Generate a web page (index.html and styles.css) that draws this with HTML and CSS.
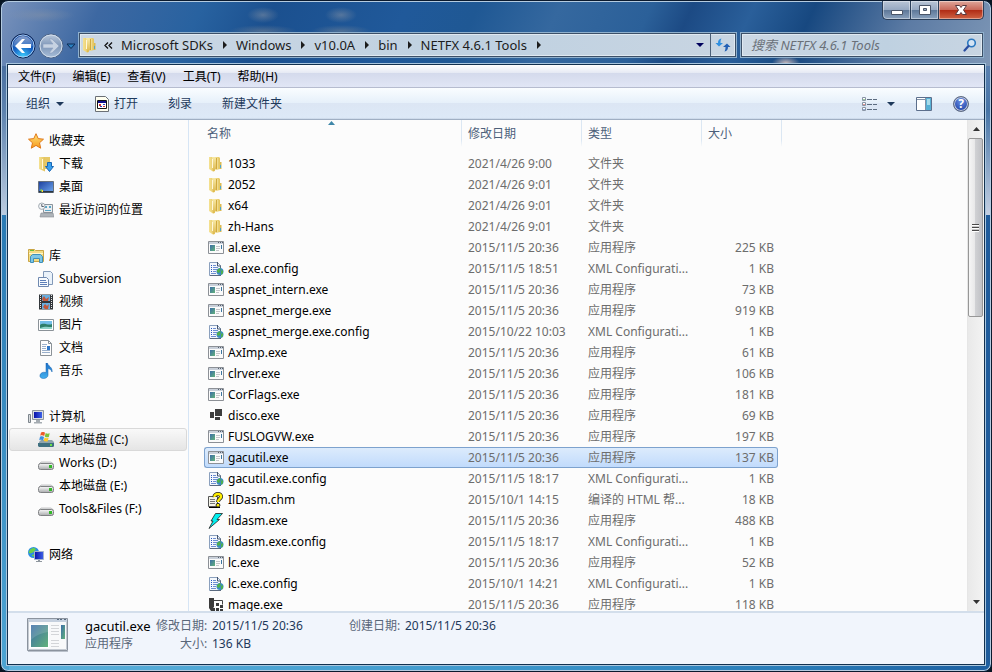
FILE: index.html
```html
<!DOCTYPE html>
<html lang="zh-CN">

<head>
    <meta charset="UTF-8">
    <meta name="viewport" content="width=device-width, initial-scale=1.0">
    <title>NETFX 4.6.1 Tools</title>
    <link rel="stylesheet" href="styles.css">
</head>

<body>
    <!-- icon sprite -->
    <svg class="sprite" aria-hidden="true">
        <defs>
            <linearGradient id="gFolder" x1="0" x2="1" y1="0" y2="0">
                <stop offset="0" stop-color="#f5e293"/><stop offset="1" stop-color="#e3c35c"/>
            </linearGradient>
            <linearGradient id="gFlap" x1="0" x2="0" y1="0" y2="1">
                <stop offset="0" stop-color="#f7e9a8"/><stop offset="1" stop-color="#dcb648"/>
            </linearGradient>
            <linearGradient id="gExe" x1="0" x2="1" y1="0" y2="1">
                <stop offset="0" stop-color="#3c6da8"/><stop offset="1" stop-color="#62b27a"/>
            </linearGradient>
            <linearGradient id="gScreen" x1="0" x2="1" y1="0" y2="1">
                <stop offset="0" stop-color="#1c3f9c"/><stop offset="1" stop-color="#6fa8f0"/>
            </linearGradient>
            <linearGradient id="gMonitor" x1="0" x2="1" y1="0" y2="0">
                <stop offset="0" stop-color="#0a12a8"/><stop offset="1" stop-color="#3d62e8"/>
            </linearGradient>
            <linearGradient id="gStar" x1="0" x2="0" y1="0" y2="1">
                <stop offset="0" stop-color="#ffe27a"/><stop offset="1" stop-color="#f59a1c"/>
            </linearGradient>
            <linearGradient id="gNote" x1="0" x2="0" y1="0" y2="1">
                <stop offset="0" stop-color="#1c6fc8"/><stop offset="1" stop-color="#43b0ee"/>
            </linearGradient>
            <linearGradient id="gDrive" x1="0" x2="0" y1="0" y2="1">
                <stop offset="0" stop-color="#fafafa"/><stop offset="1" stop-color="#a9abad"/>
            </linearGradient>
            <radialGradient id="gBack" cx=".5" cy=".95" r=".9">
                <stop offset="0" stop-color="#3fd0ff"/><stop offset=".5" stop-color="#1763c4"/><stop offset="1" stop-color="#0c3a93"/>
            </radialGradient>
            <linearGradient id="gGloss" x1="0" x2="0" y1="0" y2="1">
                <stop offset="0" stop-color="#fff" stop-opacity=".85"/><stop offset="1" stop-color="#fff" stop-opacity=".2"/>
            </linearGradient>
            <linearGradient id="gForward" x1="0" x2="0" y1="0" y2="1">
                <stop offset="0" stop-color="#b9c8dc"/><stop offset=".5" stop-color="#7f97b8"/><stop offset="1" stop-color="#a9bfda"/>
            </linearGradient>
        </defs>

        <symbol id="folder" viewBox="0 0 16 16">
            <path d="M1 1h6v14l-2 .5L1 13z" fill="url(#gFolder)"/>
            <path d="M7 1h4l1 1v11l-4 1z" fill="url(#gFolder)"/>
            <path d="M4 1h3l1 2v10l-3 2.500z" fill="url(#gFlap)"/>
            <path d="M4.500 3v9" stroke="#fff8dc"/>
            <path d="M8.500 2v11" stroke="#d0a93e"/>
            <path d="M9.500 2v11" stroke="#f0dc90"/>
            <path d="M12 6h1.500v7H12z" fill="#dcb950"/>
            <path d="M12 9h1v3h-1z" fill="#4aa6d0"/>
        </symbol>
        <symbol id="exe" viewBox="0 0 16 16">
            <path d="M.5 1.500h15v12H.5z" fill="#fbfbfb" stroke="#8c9096"/>
            <path d="M1 2h14v2H1z" fill="#c9d0da"/>
            <path d="M10 2h1v1h-1zM12 2h1v1h-1zM14 2h1v1h-1z" fill="#55606e"/>
            <path d="M2 5h5v6H2z" fill="url(#gExe)"/>
            <path d="M8 6.500h4M8 8.500h4M8 10.500h3" stroke="#c3c6ca"/>
            <path d="M13 5h1v4h-1z" fill="#3c76a0"/>
        </symbol>
        <symbol id="config" viewBox="0 0 16 16">
            <path d="M1.500 1.500h8l3 3v10h-11z" fill="#f4f8fd" stroke="#8ba0bd"/>
            <path d="M9.500 1v4h3.500" fill="none" stroke="#46566e"/>
            <path d="M12.500 5v10M2 14.500h10" stroke="#5a6a80"/>
            <path d="M3 4.500h1M3 6.500h1M3 8.500h1M3 10.500h1" stroke="#2454c0"/>
            <path d="M5 4.500h3M5 6.500h5M5 8.500h4M5 10.500h3M3 12.500h5" stroke="#6f8fd2"/>
            <circle cx="12" cy="10.500" r="3.500" fill="#3b8ac4"/>
            <path d="M9 9l3-2 1 2-2 3-2-1zM13 10l2-1v3l-2 2z" fill="#4faf4c"/>
        </symbol>
        <symbol id="disco" viewBox="0 0 16 16">
            <path d="M2 4h4v6H2zM7 1h7v7H7zM7 9h5v3H7z" fill="#3d3d3d"/>
        </symbol>
        <symbol id="chm" viewBox="0 0 16 16">
            <path d="M.5 4.500h9v10h-9z" fill="#f4f4ea" stroke="#555"/>
            <path d="M1 15.500h11" stroke="#000"/>
            <path d="M2 7.500h5M2 9.500h5M2 11.500h5" stroke="#777"/>
            <path d="M6.500 5C6 1 14 1 13 5c-.5 2-3 2-3 5" fill="none" stroke="#222" stroke-width="4"/>
            <path d="M6.500 5C6 1 14 1 13 5c-.5 2-3 2-3 5" fill="none" stroke="#ffee00" stroke-width="2.500"/>
            <circle cx="10" cy="13.200" r="1.900" fill="#ffee00" stroke="#222"/>
        </symbol>
        <symbol id="bolt" viewBox="0 0 16 16">
            <path d="M7.500.5h7L9 6.500h2.500L1 15.500l4-7.500H3z" fill="#00f0f0" stroke="#222" stroke-width=".8"/>
        </symbol>
        <symbol id="mage" viewBox="0 0 16 16">
            <path d="M1 1h5v9l-1 1h2v3H3l-2-3z" fill="#3a3a3a"/>
            <path d="M6 3.500h8.500v4" fill="none" stroke="#444"/>
            <path d="M8 6h3v3H8zM12 8h3v3h-3zM8 11h3v3H8zM12 12h3v3h-3z" fill="#3a3a3a"/>
        </symbol>
        <symbol id="star" viewBox="0 0 16 16">
            <path d="M8 .7l2.200 4.900 5.300.6-4 3.600 1.200 5.400L8 12.400l-4.700 2.800 1.200-5.400-4-3.600 5.300-.6z" fill="url(#gStar)" stroke="#e07818"/>
        </symbol>
        <symbol id="download" viewBox="0 0 16 16">
            <path d="M1 1h6v14.500L1 13z" fill="url(#gFolder)"/>
            <path d="M7 1h5v12H7z" fill="#e6c866"/>
            <path d="M4.500 3v10" stroke="#fff8dc"/>
            <path d="M9.500 6.500h4v4h2l-4 5-4-5h2z" fill="#3aa0ee" stroke="#1766b4"/>
        </symbol>
        <symbol id="desktop" viewBox="0 0 16 16">
            <path d="M.5 2.500h15v11H.5z" fill="url(#gScreen)" stroke="#66707c"/>
            <path d="M1 12h14v1.500H1z" fill="#2b3640"/>
            <path d="M2 11l1.500-1 1 1.500-1 1.500z" fill="#7fd04c"/>
            <path d="M4 11h1v2H4z" fill="#ffcf3a"/>
        </symbol>
        <symbol id="recent" viewBox="0 0 16 16">
            <path d="M5.500 2.500h9v8h-9z" fill="#e9edf0" stroke="#8b949c"/>
            <path d="M7 4h2v2H7zM11 4h2v2h-2zM7 8h6v1H7z" fill="#58a6c8"/>
            <path d="M3 11h12l1 4H2z" fill="#aeb4b9" stroke="#868c92" stroke-width=".6"/>
            <circle cx="3.800" cy="4.200" r="3.200" fill="#f4f6f8" stroke="#a2aab1"/>
            <path d="M3.800 2v2.500h2" fill="none" stroke="#56606a"/>
        </symbol>
        <symbol id="library" viewBox="0 0 16 16">
            <path d="M.5 3.500v-2h6l1 1h8v11H.5z" fill="#f2dc85" stroke="#c9a545"/>
            <path d="M2 2.500h4" stroke="#6cbf3a"/>
            <path d="M1 5.500h14" stroke="#fff6cd"/>
            <path d="M2.500 14.500v-6l2-2h8l2 2v6h-3v-4h-6v4z" fill="#7cc6e6" stroke="#3f8fb8"/>
        </symbol>
        <symbol id="subversion" viewBox="0 0 16 16">
            <path d="M5.500.5h7l2 2v11h-9z" fill="#eaf2fa" stroke="#8299b8"/>
            <path d="M.5 6.500h8l2 2v7H.5z" fill="#f8fbfe" stroke="#6f89b0"/>
            <path d="M2 9.500h6M2 11.500h7M2 13.500h7" stroke="#5e7fb8"/>
        </symbol>
        <symbol id="video" viewBox="0 0 16 16">
            <path d="M1 .5h14v15H1z" fill="#33373b"/>
            <path d="M2.500 1v14M13.500 1v14" stroke="#e8e8e8" stroke-dasharray="1 1"/>
            <path d="M4 1h8v6H4zM4 9h8v6H4z" fill="#68aee0"/>
            <path d="M4 5l2-3 2 3 3-2-1 4H5zM5 13l2-3 2 2 2-2-1 5H7z" fill="#c2573a"/>
        </symbol>
        <symbol id="picture" viewBox="0 0 16 16">
            <path d="M.5 2.500h15v11H.5z" fill="#fff" stroke="#8b9298"/>
            <path d="M2 4h12v4H2z" fill="#74bfe8"/>
            <path d="M2 8c4-3 8 1 12-1v5H2z" fill="#2f7f6a"/>
            <path d="M2 11c5-2 8-1 12-1v2H2z" fill="#8fd4c8"/>
        </symbol>
        <symbol id="document" viewBox="0 0 16 16">
            <path d="M2.500.5h8l3 3v12h-11z" fill="#fdfdfd" stroke="#8b9298"/>
            <path d="M10.500.5v3h3" fill="none" stroke="#8b9298"/>
            <path d="M4 4.500h5M4 6.500h4M4 8.500h4M4 10.500h8M4 12.500h8" stroke="#9ab0cc"/>
            <path d="M9 6h3v4H9z" fill="#2f77c8"/>
        </symbol>
        <symbol id="music" viewBox="0 0 16 16">
            <path d="M8 0h1.500c0 3 5.500 4 4.500 9-.5-2-2-3-4-3.500V12c0 2-2 3.500-4.500 3.500S1.500 14 2 12s3-3.500 6-2.500z" fill="url(#gNote)" stroke="#1763b0" stroke-width=".5"/>
        </symbol>
        <symbol id="computer" viewBox="0 0 16 16">
            <path d="M.5 5.500h2v8h-2z" fill="#d8dcdf" stroke="#7d858c"/>
            <path d="M4.500 1.500h11v9h-11z" fill="#d9dde1" stroke="#8f979e"/>
            <path d="M6 3h8v6H6z" fill="url(#gMonitor)"/>
            <path d="M8 11h4v2h2v1.500H6V13h2z" fill="#a5acb2"/>
        </symbol>
        <symbol id="sysdrive" viewBox="0 0 16 16">
            <path d="M1 10l2-2h11l2 2v4l-1 1H1z" fill="#8fa3ad"/>
            <path d="M0 11h16v3l-1 1H1l-1-1z" fill="#3f7080"/>
            <path d="M12 12h2v2h-2z" fill="#6be04a"/>
            <path d="M3 .5c2-1 3-.5 4 .3L6.200 4c-1-.8-2.500-1-4-.3z" fill="#ee5a28"/>
            <path d="M7.700 1c1 .8 2.500 1 4 .3L10.800 5c-1.500.6-3 .4-4-.5z" fill="#7cc23a"/>
            <path d="M2 4.700c1.500-.7 3-.5 4 .3L5.200 8.500c-1-.8-2.500-1-4-.3z" fill="#3a8ee0"/>
            <path d="M6.600 5.400c1 .8 2.500 1 4 .3l-.9 3.500c-1.500.6-3 .4-4-.4z" fill="#ffc928"/>
        </symbol>
        <symbol id="drive" viewBox="0 0 16 16">
            <path d="M1 9l2-2h10l2.500 2z" fill="#e4e5e6" stroke="#a4a6a8" stroke-width=".6"/>
            <rect x=".5" y="8.500" width="15" height="6" rx="2" fill="url(#gDrive)" stroke="#808284"/>
            <path d="M11 10h3v3h-3z" fill="#34b82a"/>
        </symbol>
        <symbol id="network" viewBox="0 0 16 16">
            <circle cx="5.500" cy="5.500" r="5.500" fill="#2a8ee4"/>
            <path d="M2 2.500l4-2 2 2-3 3-3 1-1.500-1zM4 8l3-1v3l-3-1z" fill="#6ad04a"/>
            <path d="M6.500 4.500h9v8h-9z" fill="url(#gMonitor)" stroke="#a5b4cc"/>
            <path d="M10 13h2v1h2v1H8v-1h2z" fill="#8f979e"/>
        </symbol>
        <symbol id="caret" viewBox="0 0 8 4"><path d="M0 0h8L4 4z" fill="currentColor"/></symbol>
        <symbol id="arrow" viewBox="0 0 4 8"><path d="M0 0v8l4-4z" fill="currentColor"/></symbol>
    </svg>

    <div class="window">
        <div class="caption">
            <button class="cap-btn" aria-label="最小化">
                <svg width="14" height="12" viewBox="0 0 14 12"><path d="M1.500 6.500h11v4h-11z" fill="#fff" stroke="#4a5568"/></svg>
            </button>
            <button class="cap-btn" aria-label="最大化">
                <svg width="14" height="12" viewBox="0 0 14 12"><path d="M1.500 1.500h11v9h-11zM5.500 4.500h3v2h-3z" fill="#fff" fill-rule="evenodd" stroke="#4a5568"/></svg>
            </button>
            <button class="cap-btn cap-close" aria-label="关闭">
                <svg width="14" height="12" viewBox="0 0 14 12"><path d="M1.500 1.500h4L7 3.500l1.500-2h4L9.500 6l3 4.500h-4L7 8.500l-1.500 2h-4l3-4.500z" fill="#fff" stroke="#5a3a3e"/></svg>
            </button>
        </div>

        <div class="nav-row">
            <div class="travel">
                <button aria-label="后退">
                    <svg width="26" height="26" viewBox="0 0 26 26">
                        <circle cx="13" cy="13" r="12" fill="url(#gBack)" stroke="#0d2250"/>
                        <circle cx="13" cy="13" r="11" fill="none" stroke="#a9cdf2"/>
                        <path d="M3 13a10 10 0 0 1 20 0c-6 2-14 2-20 0z" fill="url(#gGloss)" opacity=".6"/>
                        <path d="M5 13l7-7h3l-4 5h10v4H11l4 5h-3z" fill="#fff"/>
                    </svg>
                </button>
                <button aria-label="前进">
                    <svg width="26" height="26" viewBox="0 0 26 26">
                        <circle cx="13" cy="13" r="12" fill="url(#gForward)" stroke="#4c6488"/>
                        <circle cx="13" cy="13" r="11" fill="none" stroke="#d2deec"/>
                        <path d="M21 13l-7-7h-3l4 5H5v4h10l-4 5h3z" fill="#c6d2e2" stroke="#8ba0bf" stroke-width=".6"/>
                    </svg>
                </button>
                <button class="history" aria-label="最近浏览的页面">
                    <svg width="10" height="7" viewBox="0 0 10 7"><path d="M1 1h8L5 5.500z" fill="#2a7fc0" stroke="#0c2c54"/></svg>
                </button>
            </div>
            <div class="address">
                <svg class="icon"><use href="#folder"/></svg>
                <button class="chevrons" aria-label="上级">
                    <svg width="9" height="7" viewBox="0 0 9 7"><path d="M4 .5L1 3.500l3 3M8 .5L5 3.500l3 3" fill="none" stroke="#111" stroke-width="1.300"/></svg>
                </button>
                <button>Microsoft SDKs</button><svg class="arrow"><use href="#arrow"/></svg>
                <button>Windows</button><svg class="arrow"><use href="#arrow"/></svg>
                <button>v10.0A</button><svg class="arrow"><use href="#arrow"/></svg>
                <button>bin</button><svg class="arrow"><use href="#arrow"/></svg>
                <button>NETFX 4.6.1 Tools</button><svg class="arrow"><use href="#arrow"/></svg>
                <button class="addr-drop" aria-label="以前的位置"><svg class="caret"><use href="#caret"/></svg></button>
                <button class="refresh" aria-label="刷新">
                    <svg width="16" height="14" viewBox="0 0 16 14">
                        <path d="M6.500.5C4 1 3 2.500 3 5H.5L4 8.500 8 5H5.500c0-2 .2-3 1-4.500z" fill="#2f8fe0"/>
                        <path d="M9.500 13.500c2.500-.5 3.500-2 3.500-4.500h2.500L12 5.500 8 9h2.500c0 2-.2 3-1 4.500z" fill="#2460b4"/>
                    </svg>
                </button>
            </div>
            <div class="search">
                <input type="text" placeholder="搜索 NETFX 4.6.1 Tools" aria-label="搜索 NETFX 4.6.1 Tools">
                <button aria-label="搜索">
                    <svg width="14" height="14" viewBox="0 0 14 14">
                        <circle cx="8.500" cy="5" r="3.800" fill="#d4e4f4" stroke="#2a78c0" stroke-width="1.600"/>
                        <path d="M5.500 8L1.500 12.500" stroke="#2a4ea0" stroke-width="2.200" stroke-linecap="round"/>
                    </svg>
                </button>
            </div>
        </div>

        <div class="client">
            <div class="menubar">
                <button>文件(F)</button>
                <button>编辑(E)</button>
                <button>查看(V)</button>
                <button>工具(T)</button>
                <button>帮助(H)</button>
            </div>

            <div class="toolbar">
                <button>组织 <svg class="caret"><use href="#caret"/></svg></button>
                <button class="open">
                    <svg width="14" height="16" viewBox="0 0 14 16">
                        <path d="M.5.5h10l3 3v12H.5z" fill="#fffff0" stroke="#6b7076"/>
                        <path d="M2.500 4.500h9v8h-9z" fill="#fff" stroke="#111"/>
                        <path d="M3 5h8v2H3z" fill="#10108c"/>
                        <path d="M4 8h2v2H4zM8 10h2v1H8z" fill="#d03030"/>
                        <path d="M8 8h2v1H8zM5 10h2v1H5z" fill="#3040c0"/>
                    </svg>
                    打开
                </button>
                <button>刻录</button>
                <button>新建文件夹</button>
                <div class="tools">
                    <button class="view" aria-label="更改您的视图">
                        <svg width="16" height="14" viewBox="0 0 16 14">
                            <path d="M.5.500h3v3h-3zM.5 5.500h3v3h-3zM.5 10.500h3v3h-3z" fill="#fff" stroke="#8894a4"/>
                            <path d="M5 2.500h5M11 2.500h4M5 7.500h5M11 7.500h4M5 12.500h5M11 12.500h4" stroke="#5c6c80"/>
                            <path d="M1.500 2h1v1h-1z" fill="#40a040"/><path d="M1.500 7h1v1h-1z" fill="#d03030"/><path d="M1.500 12h1v1h-1z" fill="#3060c0"/>
                        </svg>
                        <svg class="caret"><use href="#caret"/></svg>
                    </button>
                    <button aria-label="预览窗格">
                        <svg width="16" height="14" viewBox="0 0 16 14">
                            <path d="M.5.500h15v13H.5z" fill="#fff" stroke="#5c6f8c"/>
                            <path d="M1 2.500h9M9.500 1v12" stroke="#8292a8"/>
                            <path d="M10 1h5v12h-5z" fill="#58b0d4"/>
                            <path d="M11 2h3v6h-3z" fill="#a8dcea"/>
                        </svg>
                    </button>
                    <button class="help" aria-label="帮助">?</button>
                </div>
            </div>

            <div class="main">
                <nav class="sidebar">
                    <ul>
                        <li class="group"><a href="#"><svg class="icon"><use href="#star"/></svg>收藏夹</a></li>
                        <li><a href="#"><svg class="icon"><use href="#download"/></svg>下载</a></li>
                        <li><a href="#"><svg class="icon"><use href="#desktop"/></svg>桌面</a></li>
                        <li><a href="#"><svg class="icon"><use href="#recent"/></svg>最近访问的位置</a></li>
                    </ul>
                    <ul>
                        <li class="group"><a href="#"><svg class="icon"><use href="#library"/></svg>库</a></li>
                        <li><a href="#"><svg class="icon"><use href="#subversion"/></svg>Subversion</a></li>
                        <li><a href="#"><svg class="icon"><use href="#video"/></svg>视频</a></li>
                        <li><a href="#"><svg class="icon"><use href="#picture"/></svg>图片</a></li>
                        <li><a href="#"><svg class="icon"><use href="#document"/></svg>文档</a></li>
                        <li><a href="#"><svg class="icon"><use href="#music"/></svg>音乐</a></li>
                    </ul>
                    <ul>
                        <li class="group"><a href="#"><svg class="icon"><use href="#computer"/></svg>计算机</a></li>
                        <li class="active"><a href="#"><svg class="icon"><use href="#sysdrive"/></svg>本地磁盘 (C:)</a></li>
                        <li><a href="#"><svg class="icon"><use href="#drive"/></svg>Works (D:)</a></li>
                        <li><a href="#"><svg class="icon"><use href="#drive"/></svg>本地磁盘 (E:)</a></li>
                        <li><a href="#"><svg class="icon"><use href="#drive"/></svg>Tools&amp;Files (F:)</a></li>
                    </ul>
                    <ul>
                        <li class="group"><a href="#"><svg class="icon"><use href="#network"/></svg>网络</a></li>
                    </ul>
                </nav>

                <div class="files">
                    <table>
                        <colgroup>
                            <col class="c-name"><col class="c-date"><col class="c-type"><col class="c-size"><col class="c-end">
                        </colgroup>
                        <thead>
                            <tr>
                                <th class="sorted">名称<svg class="sort" width="7" height="4" viewBox="0 0 7 4"><path d="M0 4h7L3.500 0z" fill="#3f87a8"/></svg></th>
                                <th>修改日期</th>
                                <th>类型</th>
                                <th colspan="2">大小</th>
                            </tr>
                        </thead>
                        <tbody>
                            <tr><td><svg class="icon"><use href="#folder"/></svg>1033</td><td>2021/4/26 9:00</td><td>文件夹</td><td></td></tr>
                            <tr><td><svg class="icon"><use href="#folder"/></svg>2052</td><td>2021/4/26 9:01</td><td>文件夹</td><td></td></tr>
                            <tr><td><svg class="icon"><use href="#folder"/></svg>x64</td><td>2021/4/26 9:01</td><td>文件夹</td><td></td></tr>
                            <tr><td><svg class="icon"><use href="#folder"/></svg>zh-Hans</td><td>2021/4/26 9:01</td><td>文件夹</td><td></td></tr>
                            <tr><td><svg class="icon"><use href="#exe"/></svg>al.exe</td><td>2015/11/5 20:36</td><td>应用程序</td><td>225 KB</td></tr>
                            <tr><td><svg class="icon"><use href="#config"/></svg>al.exe.config</td><td>2015/11/5 18:51</td><td>XML Configurati...</td><td>1 KB</td></tr>
                            <tr><td><svg class="icon"><use href="#exe"/></svg>aspnet_intern.exe</td><td>2015/11/5 20:36</td><td>应用程序</td><td>73 KB</td></tr>
                            <tr><td><svg class="icon"><use href="#exe"/></svg>aspnet_merge.exe</td><td>2015/11/5 20:36</td><td>应用程序</td><td>919 KB</td></tr>
                            <tr><td><svg class="icon"><use href="#config"/></svg>aspnet_merge.exe.config</td><td>2015/10/22 10:03</td><td>XML Configurati...</td><td>1 KB</td></tr>
                            <tr><td><svg class="icon"><use href="#exe"/></svg>AxImp.exe</td><td>2015/11/5 20:36</td><td>应用程序</td><td>61 KB</td></tr>
                            <tr><td><svg class="icon"><use href="#exe"/></svg>clrver.exe</td><td>2015/11/5 20:36</td><td>应用程序</td><td>106 KB</td></tr>
                            <tr><td><svg class="icon"><use href="#exe"/></svg>CorFlags.exe</td><td>2015/11/5 20:36</td><td>应用程序</td><td>181 KB</td></tr>
                            <tr><td><svg class="icon"><use href="#disco"/></svg>disco.exe</td><td>2015/11/5 20:36</td><td>应用程序</td><td>69 KB</td></tr>
                            <tr><td><svg class="icon"><use href="#exe"/></svg>FUSLOGVW.exe</td><td>2015/11/5 20:36</td><td>应用程序</td><td>197 KB</td></tr>
                            <tr class="selected"><td><svg class="icon"><use href="#exe"/></svg>gacutil.exe</td><td>2015/11/5 20:36</td><td>应用程序</td><td>137 KB</td></tr>
                            <tr><td><svg class="icon"><use href="#config"/></svg>gacutil.exe.config</td><td>2015/11/5 18:17</td><td>XML Configurati...</td><td>1 KB</td></tr>
                            <tr><td><svg class="icon"><use href="#chm"/></svg>IlDasm.chm</td><td>2015/10/1 14:15</td><td>编译的 HTML 帮...</td><td>18 KB</td></tr>
                            <tr><td><svg class="icon"><use href="#bolt"/></svg>ildasm.exe</td><td>2015/11/5 20:36</td><td>应用程序</td><td>488 KB</td></tr>
                            <tr><td><svg class="icon"><use href="#config"/></svg>ildasm.exe.config</td><td>2015/11/5 18:17</td><td>XML Configurati...</td><td>1 KB</td></tr>
                            <tr><td><svg class="icon"><use href="#exe"/></svg>lc.exe</td><td>2015/11/5 20:36</td><td>应用程序</td><td>52 KB</td></tr>
                            <tr><td><svg class="icon"><use href="#config"/></svg>lc.exe.config</td><td>2015/10/1 14:21</td><td>XML Configurati...</td><td>1 KB</td></tr>
                            <tr><td><svg class="icon"><use href="#mage"/></svg>mage.exe</td><td>2015/11/5 20:36</td><td>应用程序</td><td>118 KB</td></tr>
                        </tbody>
                    </table>
                </div>

                <div class="scrollbar">
                    <button aria-label="向上滚动"><svg width="7" height="4" viewBox="0 0 7 4"><path d="M0 4h7L3.500 0z" fill="#333"/></svg></button>
                    <div class="thumb"><span class="grip"></span></div>
                    <button aria-label="向下滚动"><svg width="7" height="4" viewBox="0 0 7 4"><path d="M0 0h7L3.500 4z" fill="#333"/></svg></button>
                </div>
            </div>

            <div class="details">
                <svg width="42" height="36" viewBox="0 0 42 36">
                    <path d="M.5 1.500h40v32H.5z" fill="#f8f9fa" stroke="#8b939e"/>
                    <path d="M1.500 2.500h38v30h-38z" fill="none" stroke="#c4cad2"/>
                    <path d="M2 2h38v3H2z" fill="#c5d0de"/>
                    <path d="M30 2h2v1h-2zM33 2h2v1h-2zM37 2h2v1h-2z" fill="#596b80"/>
                    <path d="M3 7h19v24H3z" fill="#fff"/>
                    <path d="M4 8h17v22H4z" fill="url(#gExe)"/>
                    <path d="M4 8h17v7C15 16 9 18 4 23z" fill="#fff" opacity=".15"/>
                    <path d="M24 8.500h8M24 11.500h8M24 14.500h8M24 17.500h8M24 23.500h8M24 26.500h8M24 29.500h8" stroke="#d3d5d8"/>
                    <path d="M34 8h4v14h-4z" fill="url(#gExe)"/>
                    <path d="M1 34.500h40" stroke="#b9c0ca"/>
                </svg>
                <div class="info">
                    <span class="name">gacutil.exe</span>
                    <span class="key">修改日期:</span>
                    <span class="value">2015/11/5 20:36</span>
                    <span class="key">创建日期:</span>
                    <span class="value">2015/11/5 20:36</span>
                    <span class="kind">应用程序</span>
                    <span class="key">大小:</span>
                    <span class="value">136 KB</span>
                </div>
            </div>
        </div>
    </div>
</body>

</html>
```
FILE: styles.css
```css
* {
    box-sizing: border-box;
}

body {
    margin: 0;
    background-color: #071522;
    font-family: "Noto Sans", "Noto Sans CJK SC", sans-serif;
    font-size: 12px;
    line-height: 20px;
    color: #000;
}

button {
    display: flex;
    align-items: center;
    margin: 0;
    padding: 0;
    border: 0;
    background: none;
    font: inherit;
    color: inherit;
    white-space: nowrap;
}

ul {
    list-style: none;
    margin: 0 0 23px;
    padding: 0;
}

svg {
    flex: none;
}

.sprite {
    position: absolute;
    width: 0;
    height: 0;
}

.icon {
    width: 16px;
    height: 16px;
}

.caret {
    width: 8px;
    height: 4px;
}

.arrow {
    width: 4px;
    height: 8px;
    margin: 0 9px 0 10px;
}

/* glass frame */
.window {
    display: flex;
    flex-direction: column;
    height: 100vh;
    padding: 1px 7px 7px;
    border: 1px solid #0b1a2e;
    border-radius: 8px;
    box-shadow: inset 0 0 0 1px #b4cbe0;
    background:
        linear-gradient(#4a6fa0, #5c82ae 30%, #bccce0) left 65px / 8px 149px no-repeat,
        linear-gradient(#5a80b0, #4674a6 30%, #c4d0e2) right 65px / 8px 149px no-repeat,
        linear-gradient(#2a7ab4, #5db8e2) left 214px / 8px 100% no-repeat,
        linear-gradient(90deg, #5db2dc, #3e98cc 50%, #2a7cb8 80%, #1d5fa0) left bottom / 100% 8px no-repeat,
        radial-gradient(34px 7px at 40px 14px, rgba(140, 150, 165, .4), transparent),
        radial-gradient(16px 8px at 262px 14px, rgba(140, 150, 165, .5), transparent),
        radial-gradient(34px 6px at 262px 30px, rgba(150, 150, 150, .4), transparent),
        radial-gradient(16px 8px at 340px 14px, rgba(140, 150, 165, .5), transparent),
        radial-gradient(30px 6px at 340px 30px, rgba(150, 150, 150, .4), transparent),
        radial-gradient(14px 7px at 785px 62px, rgba(240, 210, 200, .8), transparent),
        linear-gradient(115deg, #7a93bc 0, #3d68a2 10%, #2862a0 20%, #1b508f 27%, #20599a 40%, #1f5894 47%, #35689f 55%, #2b6099 64%, #1c4a84 68%, #2a5f9a 74%, #174880 80%, #5c7ba4 90%, #7e97b6 100%) top / 100% 66px no-repeat,
        #1f5c9c;
}

.caption {
    display: flex;
    justify-content: flex-end;
    height: 31px;
    margin-top: -1px;
}

.cap-btn {
    justify-content: center;
    width: 28px;
    height: 19px;
    border: 1px solid #2c3f59;
    border-top: 0;
    border-right: 0;
    background: linear-gradient(#b9c5d6, #97a9c2 48%, #5d7798 50%, #8aa1bd);
    box-shadow: inset 0 0 0 1px rgba(255, 255, 255, .4);
}

.cap-btn:first-child {
    border-bottom-left-radius: 5px;
}

.cap-close {
    width: 46px;
    border-right: 1px solid #2c3f59;
    border-bottom-right-radius: 5px;
    background: linear-gradient(#dfa79b, #c9695a 48%, #b02a14 50%, #cf6444);
}

.nav-row {
    display: flex;
    align-items: flex-start;
    gap: 5px;
    height: 32px;
    padding-right: 1px;
}

.travel {
    display: flex;
    align-items: center;
    gap: 2px;
    width: 64px;
    height: 28px;
    margin-left: 2px;
}

.address,
.search {
    display: flex;
    align-items: center;
    height: 24px;
    margin-top: 1px;
    border: 1px solid #3c5068;
    box-shadow: 0 0 0 1px #8fb0cd, inset 0 0 0 1px #e0e9f1;
    background: linear-gradient(90deg, #ccd8e4, #bfd1e1 60%, #c8d5e2);
}

.address {
    flex: 1;
    padding-left: 2px;
    font-size: 13px;
    color: #1c1c1c;
}

.chevrons {
    margin: 0 8px 0 6px;
}

.addr-drop {
    height: 22px;
    margin-left: auto;
    padding: 0 6px;
    color: #00005c;
}

.refresh {
    justify-content: center;
    width: 25px;
    height: 22px;
    border-left: 1px solid #4c6078;
}

.search {
    width: 242px;
    padding: 0 5px 0 9px;
}

.search input {
    flex: 1;
    min-width: 0;
    padding: 0;
    border: 0;
    outline: 0;
    background: none;
    font: italic 13px "Noto Sans", "Noto Sans CJK SC", sans-serif;
}

.search input::placeholder {
    color: #6a7078;
    opacity: 1;
}

.client {
    display: flex;
    flex: 1;
    flex-direction: column;
    min-height: 0;
    margin-top: 1px;
    box-shadow: 0 0 0 1px #12304e, 0 0 0 2px #a9c6de;
    background-color: #fcfcfc;
}

.menubar {
    display: flex;
    gap: 1px;
    height: 23px;
    padding: 2px 2px 0;
    border-bottom: 1px solid #b6bccf;
    background: linear-gradient(#fff, #e6eaf4 35%, #d4daec 37%, #e1e6f5);
}

.menubar button {
    padding: 0 8px;
}

.toolbar {
    display: flex;
    height: 32px;
    padding: 0 15px 0 18px;
    border-bottom: 1px solid #a0afc3;
    background: linear-gradient(#fafdff, #e6f0fa 48%, #dce6f4 50%, #dde9f7 95%, #c8d5e6);
    color: #1e395b;
}

.toolbar .caret {
    margin-left: 6px;
}

.open {
    gap: 5px;
    margin: 0 30px 0 31px;
}

.toolbar > button:nth-of-type(3) {
    margin-right: 30px;
}

.tools {
    display: flex;
    gap: 21px;
    align-items: center;
    margin-left: auto;
}

.view .caret {
    margin-left: 9px;
}

.tools .help {
    justify-content: center;
    width: 16px;
    height: 16px;
    border: 1px solid #5d6980;
    border-radius: 50%;
    background: radial-gradient(circle at 50% 30%, #6a90e4, #10309a);
    box-shadow: inset 0 0 0 1px #c4cbd8;
    color: #fff;
    font-weight: bold;
}

.main {
    display: flex;
    flex: 1;
    min-height: 0;
}

.sidebar {
    flex: none;
    width: 181px;
    padding: 9px 1px 0;
    border-right: 1px solid #d6e5f5;
}

.sidebar a {
    display: flex;
    align-items: center;
    gap: 5px;
    height: 23px;
    padding-left: 28px;
    border: 1px solid transparent;
    color: #000;
    text-decoration: none;
}

.sidebar .group a {
    padding-left: 18px;
}

.sidebar .active a {
    border-color: #d9d9d9;
    border-radius: 3px;
    background: linear-gradient(#f9f9f9, #e5e5e5);
}

.files {
    flex: 1;
    min-width: 0;
    padding-left: 15px;
    overflow: hidden;
}

table {
    width: 578px;
    table-layout: fixed;
    border-collapse: separate;
    border-spacing: 0;
}

.c-name {
    width: 258px;
}

.c-date,
.c-type {
    width: 120px;
}

.c-size {
    width: 76px;
}

.c-end {
    width: 4px;
}

th {
    position: relative;
    height: 33px;
    padding: 4px 6px 9px;
    border-right: 1px solid;
    border-image: linear-gradient(#dbe7f3 60%, transparent 80%) 1;
    font-weight: normal;
    text-align: left;
    color: #4c607a;
}

th.sorted {
    padding-left: 3px;
}

.sort {
    position: absolute;
    top: 1px;
    left: 50%;
    margin-left: -5px;
}

td {
    height: 21px;
    padding: 0 6px;
    border: solid transparent;
    border-width: 1px 0;
    line-height: 19px;
    white-space: nowrap;
    color: #6d6d6d;
}

td:first-child {
    padding-left: 4px;
    color: #000;
}

td .icon {
    margin-right: 4px;
    vertical-align: -4px;
}

td:nth-child(4) {
    padding: 0 4px 0 0;
    text-align: right;
}

.selected td {
    border-color: #7da2ce;
    background: linear-gradient(#dcebfc, #c1dbfc);
}

.selected td:first-child {
    border-left-width: 1px;
    border-radius: 3px 0 0 3px;
    padding-left: 3px;
}

.selected td:last-child {
    border-right-width: 1px;
    border-radius: 0 3px 3px 0;
    padding-right: 3px;
}

.scrollbar {
    display: flex;
    flex-direction: column;
    width: 17px;
    border-left: 1px solid #e6e6e6;
    background: linear-gradient(90deg, #e9e9e9, #f3f3f3);
}

.scrollbar button {
    justify-content: center;
    height: 18px;
}

.scrollbar button:last-child {
    margin-top: auto;
}

.thumb {
    display: flex;
    align-items: center;
    justify-content: center;
    height: 179px;
    margin-right: 1px;
    border: 1px solid #979797;
    border-radius: 2px;
    background: linear-gradient(90deg, #f6f6f6, #e8e8e9 45%, #d0d1d4 50%, #c0c1c5);
}

.grip {
    width: 7px;
    height: 8px;
    background: repeating-linear-gradient(#4a4a4a 0 1px, #fff 1px 2px, #c8c8c8 2px 3px);
}

.details {
    display: flex;
    height: 53px;
    padding: 4px 19px;
    gap: 16px;
    border-top: 2px solid #d3deeb;
    background-color: #f1f5fc;
    line-height: 18px;
}

.info {
    display: grid;
    grid-template-columns: 71px 56px 137px 56px 137px;
    grid-auto-rows: 18px;
    align-content: start;
    white-space: nowrap;
}

.name {
    font-size: 13px;
}

.key,
.kind {
    color: #5a6779;
}

.kind + .key {
    padding-left: 24px;
}

.value {
    color: #1e395b;
}
```
